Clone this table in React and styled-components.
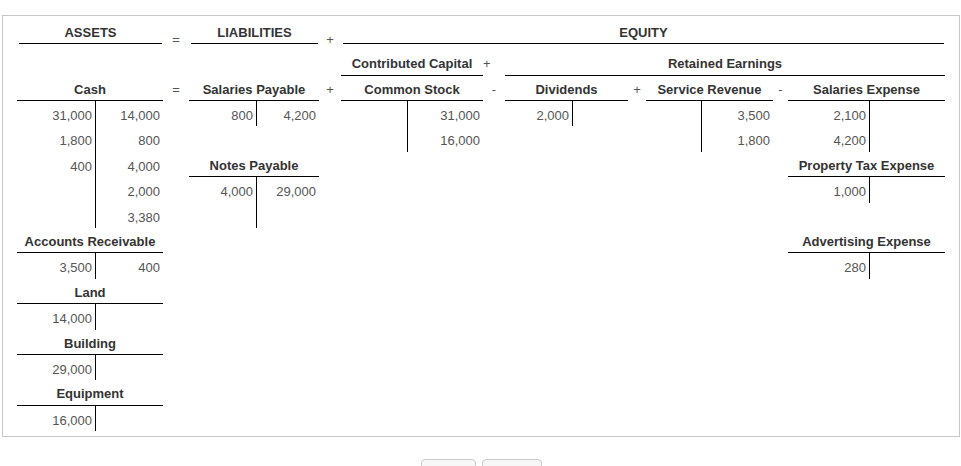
import React from "react";
import styled, { createGlobalStyle } from "styled-components";

const ROW = 25.42;

const GlobalStyle = createGlobalStyle`
  html, body {
    margin: 0;
    padding: 0;
    overflow: hidden;
    background: #ffffff;
  }
  body {
    font-family: "Liberation Sans", Arial, sans-serif;
    font-size: 13px;
    color: #333333;
  }
`;

const Page = styled.div`
  padding: 15px 0 0 2px;
`;

const Panel = styled.section`
  width: 958px;
  box-sizing: border-box;
  border: 1px solid #c6c6c6;
  padding: 0 13px 5px 14px;
`;

const HeadingRow = styled.div`
  display: flex;
  align-items: flex-start;
  height: 28px;
`;

const Heading = styled.div`
  flex: 0 0 ${(p) => p.$w - 3}px;
  margin: 0 1px 0 2px;
  box-sizing: border-box;
  height: 28px;
  padding: 9px 0 3px;
  line-height: 15px;
  border-bottom: 1px solid #000;
  text-align: center;
  font-weight: bold;
  color: #333;
`;

const HeadingOp = styled.div`
  flex: 0 0 ${(p) => p.$w}px;
  padding-top: 15.5px;
  line-height: 15px;
  text-align: center;
  color: #555;
`;

const SubheadingRow = styled.div`
  display: flex;
  align-items: flex-start;
  margin-top: 6.1px;
`;

const Gap = styled.div`
  flex: 0 0 ${(p) => p.$w}px;
`;

const Subheading = styled.div`
  flex: 0 0 ${(p) => p.$w}px;
  box-sizing: border-box;
  height: ${ROW}px;
  padding-top: 5.5px;
  line-height: 15px;
  border-bottom: 1px solid #000;
  text-align: center;
  font-weight: bold;
  color: #333;
  white-space: nowrap;
`;

const SubOp = styled.div`
  flex: 0 0 ${(p) => p.$w}px;
  padding-top: 5.5px;
  line-height: 15px;
  text-align: left;
  color: #555;
`;

const Body = styled.div`
  display: flex;
  align-items: flex-start;
`;

const AccountColumn = styled.div`
  flex: 0 0 ${(p) => p.$w}px;
  display: flex;
  flex-direction: column;
`;

const OperatorColumn = styled.div`
  flex: 0 0 ${(p) => p.$w}px;
  height: ${ROW}px;
  box-sizing: border-box;
  padding-top: 6px;
  line-height: 15px;
  text-align: center;
  color: #555;
`;

const AccountTitle = styled.div`
  box-sizing: border-box;
  height: ${ROW}px;
  padding-top: 6px;
  line-height: 15px;
  border-bottom: 1px solid #000;
  text-align: center;
  font-weight: bold;
  color: #333;
  white-space: nowrap;
`;

const Entry = styled.div`
  display: grid;
  grid-template-columns: ${(p) => p.$split}px 1fr;
  height: ${ROW}px;
`;

const Amount = styled.div`
  box-sizing: border-box;
  height: ${ROW}px;
  padding: 7px 3px 0 0;
  line-height: 15px;
  text-align: right;
  color: #555;
  border-right: ${(p) => (p.$debit ? "1px solid #000" : "none")};
`;

const BlankRow = styled.div`
  height: ${ROW}px;
`;

const ButtonBar = styled.div`
  width: 958px;
  display: flex;
  justify-content: center;
  gap: 6px;
  margin-top: 22px;
`;

const NavButton = styled.button`
  width: ${(p) => p.$w}px;
  height: 30px;
  border: 1px solid #cccccc;
  border-radius: 4px;
  background: #f7f7f7;
  padding: 0;
`;

function TAccount({ title, split, rows }) {
  return (
    <>
      <AccountTitle>{title}</AccountTitle>
      {rows.map(([debit, credit], i) => (
        <Entry key={i} $split={split}>
          <Amount $debit>{debit}</Amount>
          <Amount>{credit}</Amount>
        </Entry>
      ))}
    </>
  );
}

export default function App() {
  return (
    <Page>
      <GlobalStyle />
      <Panel>
        <HeadingRow>
          <Heading $w={146}>ASSETS</Heading>
          <HeadingOp $w={26}>=</HeadingOp>
          <Heading $w={130}>LIABILITIES</Heading>
          <HeadingOp $w={22}>+</HeadingOp>
          <Heading $w={604}>EQUITY</Heading>
        </HeadingRow>

        <SubheadingRow>
          <Gap $w={324} />
          <Subheading $w={142}>Contributed Capital</Subheading>
          <SubOp $w={22}>+</SubOp>
          <Subheading $w={440}>Retained Earnings</Subheading>
        </SubheadingRow>

        <Body>
          <AccountColumn $w={146}>
            <TAccount
              title="Cash"
              split={79}
              rows={[
                ["31,000", "14,000"],
                ["1,800", "800"],
                ["400", "4,000"],
                ["", "2,000"],
                ["", "3,380"],
              ]}
            />
            <TAccount title="Accounts Receivable" split={79} rows={[["3,500", "400"]]} />
            <TAccount title="Land" split={79} rows={[["14,000", ""]]} />
            <TAccount title="Building" split={79} rows={[["29,000", ""]]} />
            <TAccount title="Equipment" split={79} rows={[["16,000", ""]]} />
          </AccountColumn>

          <OperatorColumn $w={26}>=</OperatorColumn>

          <AccountColumn $w={130}>
            <TAccount title="Salaries Payable" split={68} rows={[["800", "4,200"]]} />
            <BlankRow />
            <TAccount
              title="Notes Payable"
              split={68}
              rows={[
                ["4,000", "29,000"],
                ["", ""],
              ]}
            />
          </AccountColumn>

          <OperatorColumn $w={22}>+</OperatorColumn>

          <AccountColumn $w={142}>
            <TAccount
              title="Common Stock"
              split={67}
              rows={[
                ["", "31,000"],
                ["", "16,000"],
              ]}
            />
          </AccountColumn>

          <OperatorColumn $w={22}>-</OperatorColumn>

          <AccountColumn $w={123}>
            <TAccount title="Dividends" split={68} rows={[["2,000", ""]]} />
          </AccountColumn>

          <OperatorColumn $w={18}>+</OperatorColumn>

          <AccountColumn $w={127}>
            <TAccount
              title="Service Revenue"
              split={56}
              rows={[
                ["", "3,500"],
                ["", "1,800"],
              ]}
            />
          </AccountColumn>

          <OperatorColumn $w={15}>-</OperatorColumn>

          <AccountColumn $w={157}>
            <TAccount
              title="Salaries Expense"
              split={82}
              rows={[
                ["2,100", ""],
                ["4,200", ""],
              ]}
            />
            <TAccount title="Property Tax Expense" split={82} rows={[["1,000", ""]]} />
            <BlankRow />
            <TAccount title="Advertising Expense" split={82} rows={[["280", ""]]} />
          </AccountColumn>
        </Body>
      </Panel>

      <ButtonBar>
        <NavButton $w={55} aria-label="Previous" />
        <NavButton $w={60} aria-label="Next" />
      </ButtonBar>
    </Page>
  );
}
